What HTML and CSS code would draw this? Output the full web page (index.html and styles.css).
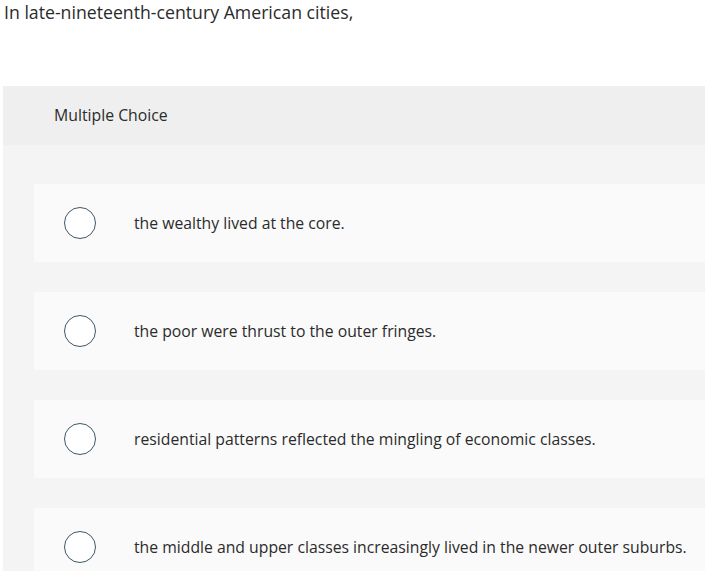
FILE: index.html
```html
<!DOCTYPE html>
<html>
<head>
<meta charset="utf-8">
<link rel="stylesheet" href="styles.css">
</head>
<body>
<p class="question">In late-nineteenth-century American cities,</p>
<div class="mc">
  <div class="mc-header">Multiple Choice</div>
  <div class="mc-body">
    <div class="option"><span class="radio"></span><span class="label">the wealthy lived at the core.</span></div>
    <div class="option"><span class="radio"></span><span class="label">the poor were thrust to the outer fringes.</span></div>
    <div class="option"><span class="radio"></span><span class="label">residential patterns reflected the mingling of economic classes.</span></div>
    <div class="option"><span class="radio"></span><span class="label">the middle and upper classes increasingly lived in the newer outer suburbs.</span></div>
  </div>
</div>
</body>
</html>
```
FILE: styles.css
```css
html, body {
  margin: 0;
  padding: 0;
  background: #ffffff;
  overflow: hidden;
}
body {
  font-family: "Open Sans", "Liberation Sans", sans-serif;
  color: #2b2b2b;
}
.question {
  margin: 0;
  padding: 0 0 0 4px;
  height: 86px;
  box-sizing: border-box;
  font-size: 17.7px;
  line-height: 24px;
}
.mc {
  margin-left: 3px;
  background: #f4f4f4;
}
.mc-header {
  background: #efefef;
  height: 59px;
  box-sizing: border-box;
  padding: 18px 0 0 51px;
  font-size: 15.8px;
  line-height: 22px;
}
.mc-body {
  display: flex;
  flex-direction: column;
  gap: 30px;
  padding: 39px 0 0 31px;
}
.option {
  background: #fafafa;
  height: 78px;
  display: flex;
  align-items: center;
}
.radio {
  width: 32px;
  height: 32px;
  box-sizing: border-box;
  border: 1.5px solid #3d5866;
  border-radius: 50%;
  background: #ffffff;
  margin-left: 30px;
  flex-shrink: 0;
}
.label {
  margin-left: 38px;
  font-size: 15.75px;
  line-height: 20px;
}
```
